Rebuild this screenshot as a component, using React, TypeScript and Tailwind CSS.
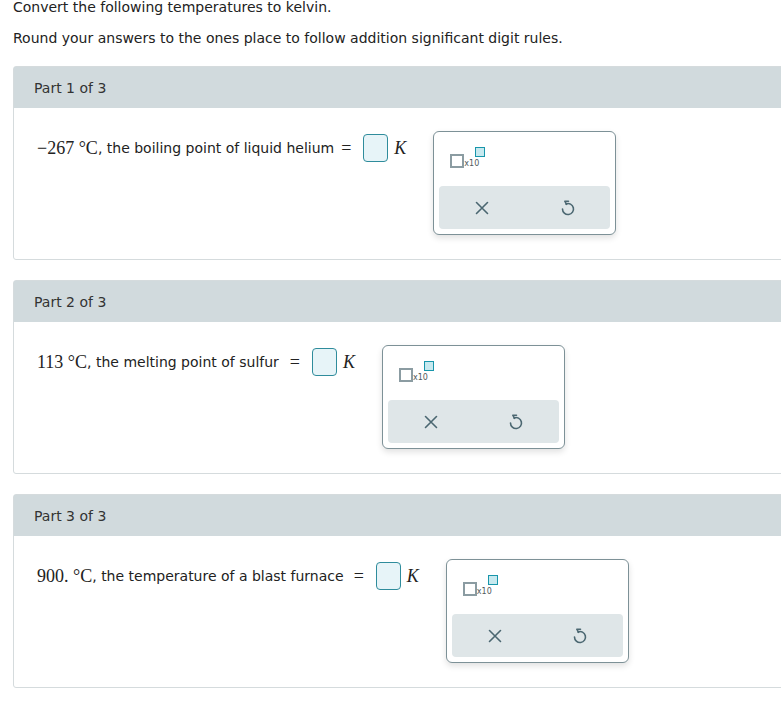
import React from 'react';

const parts = [
  { n: 1, value: '−267', label: 'the boiling point of liquid helium', gap: 'ml-[7px]' },
  { n: 2, value: '113', label: 'the melting point of sulfur', gap: 'ml-[11px]' },
  { n: 3, value: '900.', label: 'the temperature of a blast furnace', gap: 'ml-[10px]' },
];

function SciIcon() {
  return (
    <div className="relative h-[22px] w-[42px]">
      <div className="absolute left-0 top-[7px] h-[14px] w-[14px] border-2 border-[#8b9ca2] bg-white" />
      <span className="absolute left-[14px] top-[13px] text-[8px] leading-none text-[#50595c]">x10</span>
      <div className="absolute left-[25px] top-0 h-[10px] w-[10px] border-[1.5px] border-[#1896ab] bg-[#c7e9ef]" />
    </div>
  );
}

function Keypad() {
  return (
    <div className="ml-[27px] flex h-[104px] w-[183px] shrink-0 flex-col rounded-[6px] border border-[#7d9197] bg-white p-[5px] shadow-[0_3px_6px_rgba(0,0,0,0.12)]">
      <div className="h-[49px] pl-[11px] pt-[10px]">
        <SciIcon />
      </div>
      <div className="grid flex-1 grid-cols-2 items-center rounded-[4px] bg-[#dfe6e8]">
        <div className="flex justify-center">
          <svg width="14" height="14" viewBox="0 0 14 14" fill="none" stroke="#4b6771" strokeWidth="1.6" strokeLinecap="round">
            <path d="M1.5 1.5l11 11M12.5 1.5l-11 11" />
          </svg>
        </div>
        <div className="flex justify-center">
          <svg width="16" height="17" viewBox="0 0 16 17" fill="none" stroke="#4b6771" strokeWidth="1.6" strokeLinecap="round" strokeLinejoin="round">
            <path d="M2.5 10A5.5 5.5 0 1 0 6 4.9" />
            <path d="M8.5 2.2H4.8L6.6 5.4" />
          </svg>
        </div>
      </div>
    </div>
  );
}

function Part({ n, value, label, gap }: { n: number; value: string; label: string; gap: string }) {
  return (
    <div className="w-[800px] rounded-l-[3px] border border-[#d5dbdd] bg-white">
      <div className="flex h-[41px] items-center bg-[#d1dadd] pl-[20px] pt-[2px] text-[14px] text-[#333]">
        Part {n} of 3
      </div>
      <div className="flex items-start px-[23px] pb-[24px] pt-[23px]">
        <div className="mt-[3px] flex h-[28px] items-center text-[14px] text-[#222]">
          <span className="font-['Liberation_Serif',serif] text-[18px]">{value}&nbsp;°C</span>
          <span>, {label}</span>
          <span className={`${gap} mr-[12px] font-['Liberation_Serif',serif] text-[18px]`}>=</span>
          <div className="h-[28px] w-[25px] rounded-[4px] border border-[#2f8c9c] bg-[#e7f4f8]" />
          <span className="ml-[6px] font-['Liberation_Serif',serif] text-[18px] italic">K</span>
        </div>
        <Keypad />
      </div>
    </div>
  );
}

export default function App() {
  return (
    <div className="h-[709px] w-[781px] overflow-hidden bg-white pl-[13px] font-['DejaVu_Sans',Verdana,sans-serif] text-[#222]">
      <p className="-mt-[3px] text-[14px] leading-[20px]">Convert the following temperatures to kelvin.</p>
      <p className="mt-[11px] text-[14px] leading-[20px]">
        Round your answers to the ones place to follow addition significant digit rules.
      </p>
      <div className="mt-[18px] flex flex-col gap-[20px]">
        {parts.map((p) => (
          <Part key={p.n} {...p} />
        ))}
      </div>
    </div>
  );
}
